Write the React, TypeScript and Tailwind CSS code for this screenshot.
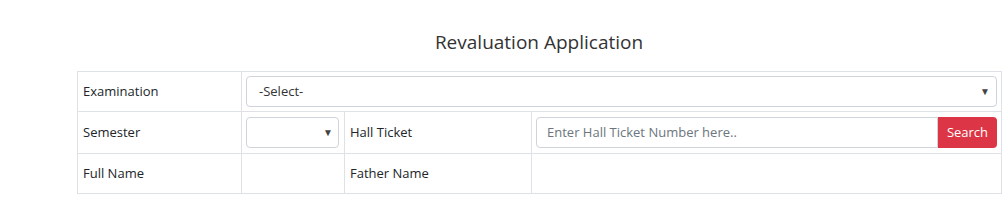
export default function App() {
  return (
    <div className="bg-white w-[1002px] h-[215px] text-[#212529]" style={{ fontFamily: '"Open Sans", "Noto Sans", sans-serif' }}>
      <div className="pt-[28px] pl-[77px]">
        <h2 className="w-[924px] text-center text-[19px] leading-[28px] mb-[15px] text-[#333]">Revaluation Application</h2>
        <table className="w-[925px] border-collapse text-[13px] table-fixed">
          <colgroup>
            <col className="w-[164px]" />
            <col className="w-[103px]" />
            <col className="w-[187px]" />
            <col />
          </colgroup>
          <tbody>
            <tr className="h-[40px]">
              <td className="border border-[#dee2e6] px-[5px]">Examination</td>
              <td className="border border-[#dee2e6] px-[4px]" colSpan={3}>
                <div className="relative">
                  <select className="appearance-none w-full h-[31px] border border-[#ced4da] rounded-[4px] pl-[12px] text-[13px] text-[#333] bg-white">
                    <option>-Select-</option>
                  </select>
                  <span className="absolute right-[7px] top-[8px] text-[10px] text-[#444] pointer-events-none">▼</span>
                </div>
              </td>
            </tr>
            <tr className="h-[42px]">
              <td className="border border-[#dee2e6] px-[5px]">Semester</td>
              <td className="border border-[#dee2e6] px-[4px]">
                <div className="relative w-[93px]">
                  <select className="appearance-none w-full h-[31px] border border-[#ced4da] rounded-[4px] bg-white">
                    <option></option>
                  </select>
                  <span className="absolute right-[6px] top-[8px] text-[10px] text-[#444] pointer-events-none">▼</span>
                </div>
              </td>
              <td className="border border-[#dee2e6] px-[5px]">Hall Ticket</td>
              <td className="border border-[#dee2e6] px-[4px]">
                <div className="flex h-[31px] w-[461px]">
                  <input
                    className="flex-1 min-w-0 border border-[#ced4da] rounded-l-[4px] px-[10px] text-[13px] placeholder:text-[#6c757d]"
                    placeholder="Enter Hall Ticket Number here.."
                  />
                  <button className="w-[59px] bg-[#dc3545] text-white text-[13px] rounded-r-[4px]">Search</button>
                </div>
              </td>
            </tr>
            <tr className="h-[40px]">
              <td className="border border-[#dee2e6] px-[5px]">Full Name</td>
              <td className="border border-[#dee2e6]"></td>
              <td className="border border-[#dee2e6] px-[5px]">Father Name</td>
              <td className="border border-[#dee2e6]"></td>
            </tr>
          </tbody>
        </table>
      </div>
    </div>
  );
}
